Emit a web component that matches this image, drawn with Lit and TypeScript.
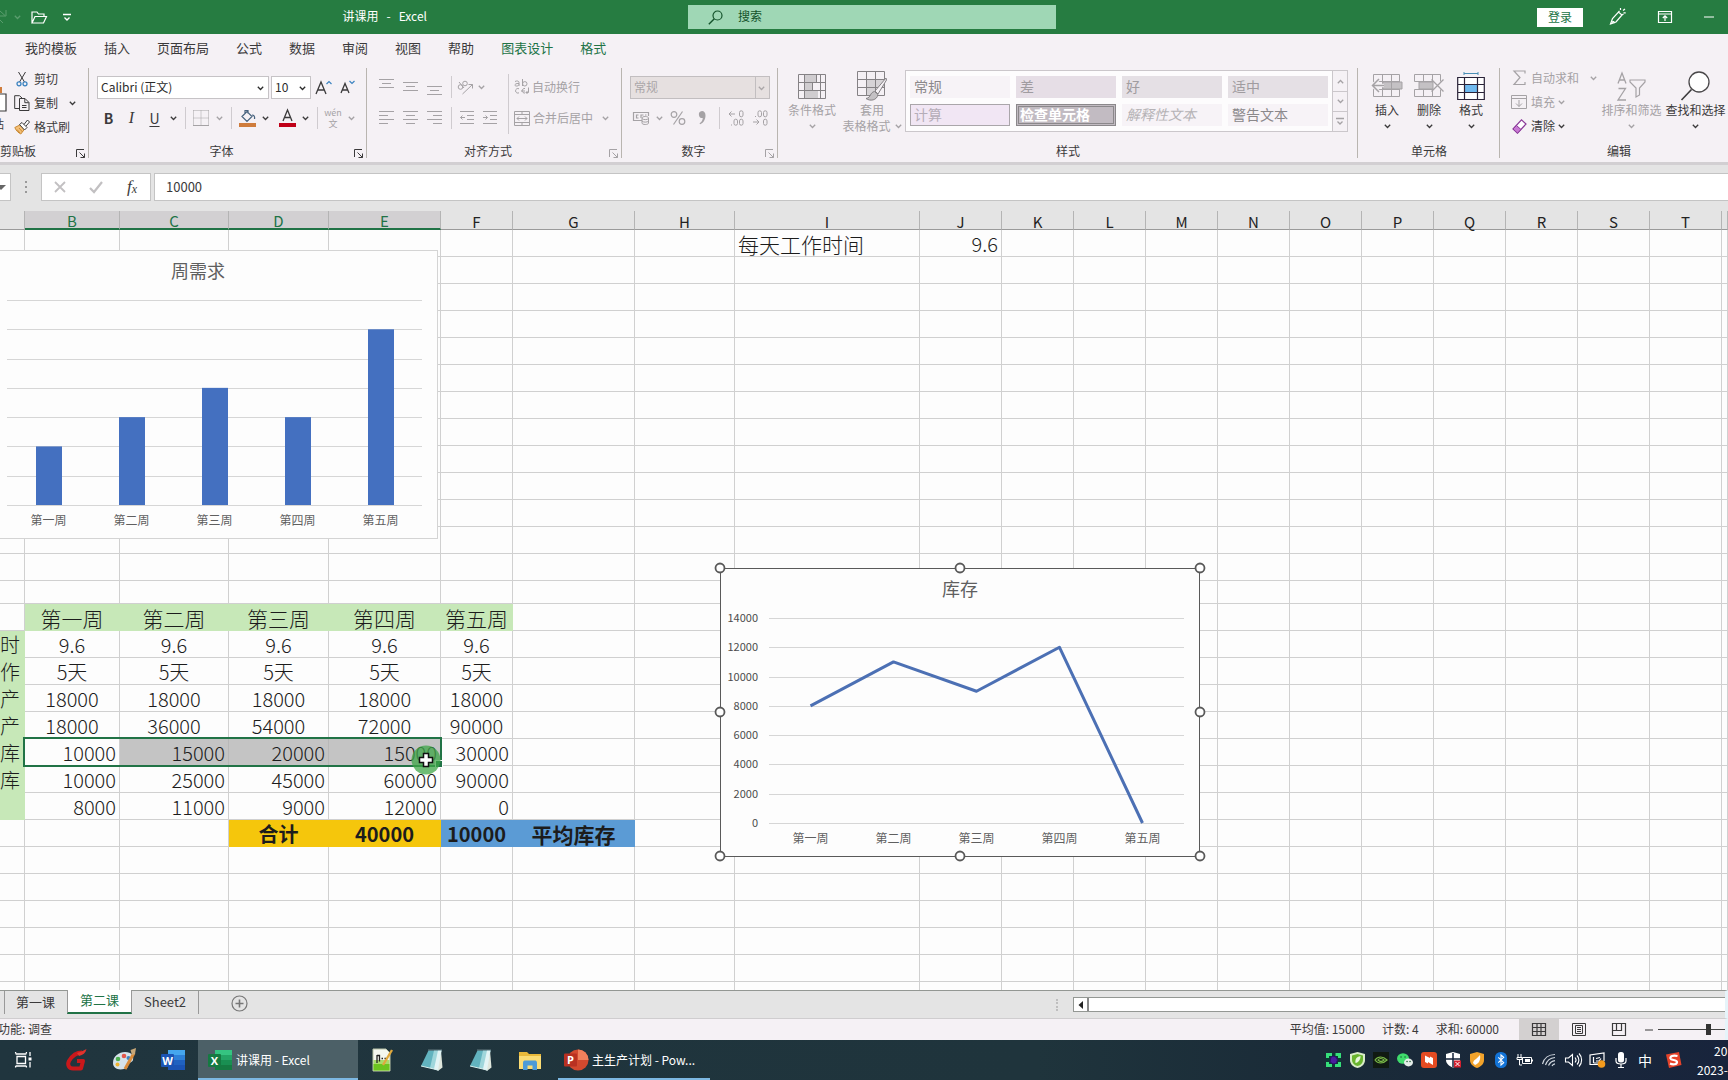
import { LitElement, html, svg, css, nothing, TemplateResult, SVGTemplateResult } from "lit";
import { customElement, property } from "lit/decorators.js";

const base = css`
  * { box-sizing: border-box; }
  :host { box-sizing: border-box; font-family: "Noto Sans CJK SC", "Noto Sans", sans-serif; font-size: 12px; line-height: 16px; color: #3b3a3b; }
  button, input, select { font: inherit; color: inherit; border: 0; padding: 0; margin: 0; background: none; border-radius: 0; outline: none; }
  button { display: inline-flex; align-items: center; justify-content: center; white-space: nowrap; }
  svg { display: block; flex: none; overflow: visible; }
`;

const icon = (w: number, h: number, body: SVGTemplateResult) =>
  html`<svg width=${w} height=${h} viewBox="0 0 ${w} ${h}" fill="none" stroke="currentColor" stroke-width="1" aria-hidden="true">${body}</svg>`;

const chevron = icon(7, 5, svg`<path d="M.8 .8 3.500 3.500 6.200 .8" stroke-width="1.300"/>`);
const launcher = icon(9, 9, svg`<path d="M.5 8V.5H8M3.500 3.500l5 5M8.500 4.500v4h-4"/>`);

const icons = {
  undo: icon(10, 16, svg`<path d="M0 2l5 4.500M6 1v6H0M0 11l3 3"/>`),
  folder: icon(16, 13, svg`<path d="M1 12V1h5l1.500 2H13v2.500M1 12l3-6.500h11.500L12.500 12z" stroke-width="1.200"/>`),
  customize: icon(8, 7, svg`<path d="M0 .5h8M1.500 3.500 4 6l2.500-2.500" stroke-width="1.300"/>`),
  search: icon(15, 15, svg`<circle cx="9.500" cy="5.500" r="4.500" stroke-width="1.200"/><path d="M6.300 8.700.8 14.200" stroke-width="1.400"/>`),
  pen: icon(17, 18, svg`<path d="M1.500 16 3.500 10.500l6-6.500 3.500 3-6 7zM3 14.500c1-1.500 2.500-1 2 .8M9.500 4l1-1.200M13 7l1.500-1M11.500 0v2M14 2.500l2-1.500M14.500 4.800h2.200" stroke-width="1.200"/>`),
  ribbonMode: icon(14, 12, svg`<path d="M.5.500h13v11H.5zM.5 3h13M7 10V5M4.800 7 7 4.800 9.200 7" stroke-width="1.200"/>`),
  minimize: icon(10, 2, svg`<path d="M0 1h10"/>`),
  cut: icon(12, 16, svg`<path d="M2.500 1 8.500 11M9.500 1l-6 10"/><circle cx="3" cy="12.800" r="2" stroke="#3c83c0" stroke-width="1.300"/><circle cx="9" cy="12.800" r="2" stroke="#3c83c0" stroke-width="1.300"/>`),
  copy: icon(16, 16, svg`<path d="M5 13.500H.7V.7h4.800L8 3M5.500 3.500h5.500l4 4v8H5.500zM10.800 3.700v4h4M8 10.500h4.500M8 12.500h4.500"/>`),
  brush: icon(16, 16, svg`<path d="M.8 8.500l5-2.500 4.500 4.500-3.500 4.500C5.500 14.500 2 12 .8 8.500z" fill="#f5c078" stroke="#c98a35"/><path d="M3 10.500l3 3.500M5 9l3.500 4" stroke="#c98a35"/><path d="M5.500 5.500 8 3.500l5 5-2.500 2.500zM10 5.500 13.500 1 15.500 3 12 7" fill="#fff"/>`),
  growFont: icon(17, 16, svg`<path d="M1 15 6 3l5 12M2.700 11h6.600" stroke-width="1.300"/><path d="M11.500 5 14 2.500 16.500 5" stroke="#3c83c0" stroke-width="1.200"/>`),
  shrinkFont: icon(15, 14, svg`<path d="M1 13 5 3.500 9 13M2.400 10h5.200" stroke-width="1.300"/><path d="M9.500 1 12 3.500 14.500 1" stroke="#3c83c0" stroke-width="1.200"/>`),
  borders: icon(16, 16, svg`<path d="M.5.500h15M.5.5v15M15.500.5v15M8 .5v15M.5 8h15" stroke-dasharray="1 1"/><path d="M0 15.500h16"/>`),
  fill: icon(17, 18, svg`<path d="M3 7.500 8 2.500l5 5-5 5zM6 5V1.500h3v3M13 6c2 0 3 1.500 2.500 4" stroke="#46627d" stroke-width="1.200"/><path d="M0 14h17v4H0z" fill="#cf7c3c" stroke="none"/>`),
  fontColor: icon(17, 18, svg`<path d="M4 12 8.500 1 13 12M5.500 8.500h6" stroke-width="1.300"/><path d="M0 14h17v4H0z" fill="#c00018" stroke="none"/>`),
  alTop: icon(15, 18, svg`<path d="M0 1.500h15M3 5.500h9M0 9.500h15"/>`),
  alMid: icon(15, 18, svg`<path d="M0 4.500h15M3 8.500h9M0 12.500h15"/>`),
  alBottom: icon(15, 18, svg`<path d="M0 8.500h15M3 12.500h9M0 16.500h15"/>`),
  alLeft: icon(15, 14, svg`<path d="M0 .5h15M0 4.500h9M0 8.500h15M0 12.500h9"/>`),
  alCenter: icon(15, 14, svg`<path d="M0 .5h15M3 4.500h9M0 8.500h15M3 12.500h9"/>`),
  alRight: icon(15, 14, svg`<path d="M0 .5h15M6 4.500h9M0 8.500h15M6 12.500h9"/>`),
  orient: icon(17, 15, svg`<circle cx="3.500" cy="7" r="2.300"/><path d="M2 2l5 6"/><circle cx="8" cy="3.500" r="2.300"/><path d="M5.500 14 15.500 4.500M11.500 4.500h4v4"/>`),
  outdent: icon(14, 14, svg`<path d="M0 .5h14M7 4.500h7M7 8.500h7M0 12.500h14M5 6.500H.5M2.500 4.500l-2 2 2 2"/>`),
  indent: icon(14, 14, svg`<path d="M0 .5h14M7 4.500h7M7 8.500h7M0 12.500h14M0 6.500h4.500M2.500 4.500l2 2-2 2"/>`),
  wrap: icon(15, 16, svg`<path d="M1 2.500c2-1 4-.5 4 1V7M5 4.500c-5-.5-5 3-2 2.500 1 0 2-1 2-1.500M8.500 0v7"/><circle cx="10.800" cy="4.800" r="2.200"/><path d="M5 9.800a2.300 2.300 0 1 0 0 4M7 12h4M11 14a2.300 2.300 0 1 1 0-4.500M14.500 8.500v5H12M13.500 12 12 13.500 13.500 15"/>`),
  merge: icon(16, 15, svg`<path d="M.5.500h15v14H.5zM.5 3.500h15M.5 11.500h15M8 .5v3M8 11.500v3M3 7.500h10M5 5.500l-2 2 2 2M11 5.500l2 2-2 2"/>`),
  money: icon(17, 14, svg`<path d="M9 9.500H.5v-8h15V5M5.500 4h-2v3h2M8 7V4h2.500M12 4h1.500" stroke-width="1.200"/><path d="M9 7c0-2 6.500-2 6.500 0v5c0 2-6.500 2-6.500 0zM9 7.500c1 1.500 5.500 1.500 6.500 0M9 10c1 1.500 5.500 1.500 6.500 0"/>`),
  percent: icon(16, 16, svg`<circle cx="4" cy="4.500" r="2.800" stroke-width="1.200"/><circle cx="12" cy="11.500" r="2.800" stroke-width="1.200"/><path d="M12.500 1.500 3.500 14.500" stroke-width="1.200"/>`),
  comma: icon(8, 14, svg`<path d="M4 0a3.500 3.500 0 1 0 .8 7C4.500 9.500 3.500 11 1.500 12.500l.7.800C6 11.500 7.500 8 7.500 4.500 7.500 1.500 6 0 4 0z" fill="currentColor" stroke="none"/>`),
  moreDec: icon(17, 16, svg`<path d="M7 4H1M3.500 1.500 1 4l2.500 2.500M3.500 14.500v1"/><rect x="11.500" y=".8" width="3.500" height="6" rx="1.700"/><rect x="6" y="9.200" width="3.500" height="6" rx="1.700"/><rect x="11.500" y="9.200" width="3.500" height="6" rx="1.700"/>`),
  lessDec: icon(17, 16, svg`<path d="M1 12h6M4.500 9.500 7 12l-2.500 2.500M3.500 6v1"/><rect x="6" y=".8" width="3.500" height="6" rx="1.700"/><rect x="11.500" y=".8" width="3.500" height="6" rx="1.700"/><rect x="11.500" y="9.200" width="3.500" height="6" rx="1.700"/>`),
  condFormat: icon(28, 25, svg`<path d="M6 1h12v7H6zM6 8h8v8H6zM6 16h14v8H6z" fill="#cfcccf" stroke="none"/><path d="M.5.500h27v24H.5zM.5 8.500h27M.5 16.500h27M6.500.5v24M18.500.5v8M22.500.5v24M14.500 8.500v8" stroke="#858285"/>`),
  tableFormat: icon(30, 30, svg`<path d="M10 9h9v16h-9zM19 9h9v8h-9z" fill="#d6d3d6" stroke="none"/><path d="M.5.500h27v24H.5zM.5 8.500h27M.5 16.500h27M9.500.5v24M18.500.5v24" stroke="#858285"/><path d="M29 7 18 20l3 3 8.500-14z" fill="#f5f1f5" stroke="#858285"/><path d="M17.500 20.500c-5 1-3 6-8.500 7 4 3 11 2 12-4z" fill="#c4c1c4" stroke="#858285"/>`),
  insert: icon(32, 24, svg`<path d="M2.500.500h26v22h-26zM2.500 7.500h26M2.500 15.500h26M11.500.5v22M20.500.5v22"/><path d="M12 8h19v7H12z" fill="#c4c1c4"/><path d="M20.500 8v7"/><path d="M8 5 1.500 11.500 8 18M2 11.500h11" stroke-width="3.500" stroke="#f5f1f5"/><path d="M8 5 1.500 11.500 8 18M2 11.500h11" stroke-width="1.500"/>`),
  remove: icon(32, 24, svg`<path d="M1.500 7.500V.5h26v7M1.500 15.500v7h26v-7M1.500 7.500h19M1.500 15.500h19M10.500.5v22M19.500.5v22"/><path d="M6 8h14v7H6z" fill="#c4c1c4"/><path d="M18.500 5.500l12 12M30.500 5.500l-12 12" stroke-width="1.300"/>`),
  format: icon(28, 28, svg`<path d="M1 5h27v22.500H1z" fill="#fff" stroke="none"/><path d="M8 12.500h12v7.500H8z" fill="#6fb9ee" stroke="none"/><path d="M.7 5.500h26.600v22H.7zM.7 12.500h26.600M.7 20.500h26.600M7.500 5.500v22M20.500 5.500v22" stroke="#2a2338" stroke-width="1.200"/><path d="M7 1.500h14M7 0v3M21 0v3" stroke="#4a8fb5"/>`),
  sigma: icon(13, 16, svg`<path d="M12 3.500V1H1l6 6.500L1 14.500h11V12" stroke-width="1.200"/>`),
  fillDown: icon(16, 14, svg`<path d="M.5.500h15v13H.5zM.5 3.500h15M8 5v6.500M5 8.500l3 3 3-3"/>`),
  eraser: icon(15, 15, svg`<path d="M1 10 9.500.800 14 5 5.500 14.200z" fill="#fff" stroke="#8a3a98" stroke-width="1.200"/><path d="M1 10l3.500-3.500 4.500 4-3.500 3.700z" fill="#c879d4" stroke="#8a3a98"/>`),
  sort: icon(29, 29, svg`<path d="M1 11.500 5 1l4 10.500M2.500 8h5M1.500 16.500h7L1 28h8" stroke-width="1.300"/><path d="M13 8h15v2l-5.500 6v7l-3.500 2v-9L13 10z" stroke-width="1.200"/>`),
  find: icon(29, 30, svg`<circle cx="18" cy="11" r="10" fill="#fff" stroke="#4a484a" stroke-width="1.300"/><path d="M10.500 18.500.5 29" stroke-width="1.600"/>`),
  cancel: icon(12, 12, svg`<path d="M1 1l10 10M11 1 1 11" stroke="#c2c0c2" stroke-width="1.800"/>`),
  accept: icon(14, 12, svg`<path d="M1 7l4 4L13 1" stroke="#c2c0c2" stroke-width="2.200"/>`),
  normalView: icon(14, 13, svg`<path d="M.5.500h13v12H.5zM.5 4.500h13M.5 8.500h13M5 .5v12M9 .5v12" stroke-width="1.200"/>`),
  pageView: icon(14, 13, svg`<path d="M.5.500h13v12H.5zM3.500 2.500h7v8h-7zM5 4.500h4M5 6.500h4M5 8.500h4"/>`),
  breakView: icon(14, 13, svg`<path d="M.5.500h13v12H.5zM4.500.5v7h5v-7M.5 7.500h4" stroke-width="1.200"/>`),
  addSheet: icon(17, 17, svg`<circle cx="8.500" cy="8.500" r="7.500" stroke="#777" stroke-width="1.200"/><path d="M8.500 4.500v8M4.500 8.500h8" stroke="#777" stroke-width="1.600"/>`),
};

@customElement("title-bar")
export class TitleBar extends LitElement {
  static styles = [base, css`
    :host { display: grid; grid-template-columns: minmax(0, 1fr) 368px 672px; align-items: center; height: 34px; background: #267c41; color: #fff; }
    .left { display: flex; align-items: center; justify-content: space-between; padding-right: 261px; }
    .quick { display: flex; align-items: center; }
    .quick button { height: 24px; }
    .faded { color: #5a9d6e; gap: 4px; width: 23px; justify-content: flex-start; }
    .open { width: 32px; }
    .more { width: 24px; }
    .doc { white-space: pre; padding-bottom: 2px; }
    .search { display: flex; align-items: center; gap: 15px; height: 24px; padding: 0 20px; background: #9fd7b5; color: #14532b; }
    .search input { flex: 1; min-width: 0; padding-bottom: 2px; }
    .search input::placeholder { color: #14532b; opacity: 1; }
    .right { display: flex; align-items: center; justify-content: flex-end; gap: 26px; padding-right: 14px; }
    .tools { display: flex; align-items: center; gap: 32px; }
    .login { width: 46px; height: 19px; background: #fff; color: #217346; }
  `];
  render() {
    return html`
      <div class="left">
        <div class="quick">
          <button class="faded" aria-label="恢复">${icons.undo}${chevron}</button>
          <button class="open" aria-label="打开">${icons.folder}</button>
          <button class="more" aria-label="自定义">${icons.customize}</button>
        </div>
        <span class="doc">讲课用   -   Excel</span>
      </div>
      <label class="search">${icons.search}<input type="search" placeholder="搜索" aria-label="搜索"></label>
      <div class="right">
        <button class="login">登录</button>
        <div class="tools">
          <button aria-label="笔">${icons.pen}</button>
          <button aria-label="功能区显示选项">${icons.ribbonMode}</button>
          <button aria-label="最小化">${icons.minimize}</button>
        </div>
      </div>`;
  }
}

const tabs = ["我的模板", "插入", "页面布局", "公式", "数据", "审阅", "视图", "帮助", "图表设计", "格式"];
const cellStyles = [
  ["常规", "plain"], ["差", "bad"], ["好", "good"], ["适中", "good"],
  ["计算", "calc"], ["检查单元格", "check"], ["解释性文本", "explain"], ["警告文本", "plain"],
];

@customElement("excel-ribbon")
export class ExcelRibbon extends LitElement {
  static styles = [base, css`
    :host { display: block; background: #f5f1f5; border-bottom: 3px solid #d2cfd2; }
    .tabs { display: flex; gap: 27px; height: 32px; padding: 0 0 4px 25px; font-size: 13px; }
    .tabs .ctx { color: #217346; }
    .groups { display: flex; height: 96px; }
    .group { display: flex; flex-direction: column; flex: none; position: relative; overflow: hidden; }
    .group::after { content: ""; position: absolute; right: 0; top: 2px; bottom: 4px; width: 1px; background: #b9b5b0; }
    .group:last-child::after { display: none; }
    .body { flex: 1; min-height: 0; display: flex; }
    .caption { display: flex; align-items: center; height: 20px; padding-bottom: 2px; }
    .caption span { flex: 1; text-align: center; white-space: nowrap; }
    .caption button { width: 13px; height: 18px; justify-content: flex-start; padding-top: 5px; }
    .off { color: #a5a2a5; }
    .clip { width: 89px; }
    .clip .caption span { text-align: left; }
    .paste { width: 13px; overflow: hidden; display: flex; flex-direction: column; align-items: flex-start; padding-top: 9px; gap: 3px; }
    .paste-text { width: 4px; overflow: hidden; display: flex; justify-content: flex-end; }
    .stack { display: flex; flex-direction: column; padding-top: 1px; }
    .stack button { height: 24px; gap: 3px; justify-content: flex-start; }
    .stack .chev { padding-left: 8px; }
    .slot { width: 18px; display: flex; justify-content: center; }
    .font { width: 278px; }
    .align { width: 255px; }
    .number { width: 156px; }
    .styles { flex: 1 1 0; min-width: 0; }
    .cells { width: 142px; }
    .edit { width: 228px; }
    .rows { display: flex; flex-direction: column; gap: 7px; padding-top: 9px; }
    .pad { padding-left: 8px; }
    .pad7 { padding-left: 7px; }
    .first { width: 138px; }
    .row { display: flex; align-items: center; height: 24px; }
    .w24 { width: 24px; height: 24px; }
    .w23 { width: 23px; height: 24px; }
    .w22 { width: 22px; height: 24px; }
    .w18 { width: 18px; height: 24px; }
    .w14 { width: 14px; height: 24px; }
    .nudge { margin-left: 4px; }
    .sep { width: 10px; height: 22px; background: linear-gradient(#cfcbcf, #cfcbcf) center / 1px 100% no-repeat; }
    .tall { width: 6px; height: 60px; margin-top: 8px; }
    .drop { position: relative; display: flex; height: 23px; border: 1px solid #c6c3c6; background: #fff; color: #2b2b2b; }
    .drop select { appearance: none; width: 100%; padding-left: 3px; opacity: 1; }
    .drop svg { position: absolute; right: 4px; top: 9px; pointer-events: none; }
    .face { width: 172px; margin-right: 2px; }
    .size { width: 40px; }
    .numfmt { width: 140px; background: #e6e0e0; color: #aaa6a8; border-color: #c2bec0; }
    .numfmt::after { content: ""; position: absolute; right: 13px; top: 0; bottom: 0; width: 1px; background: #c2bec0; }
    .b { font-weight: 700; font-size: 14px; }
    .i { font-style: italic; font-family: "Liberation Serif", serif; font-size: 16px; }
    .u { text-decoration: underline; text-underline-offset: 2px; font-size: 14px; }
    .wen { flex-direction: column; font-size: 9px; line-height: 9px; gap: 2px; }
    .label { gap: 3px; padding-left: 3px; height: 24px; }
    .big { display: flex; flex-direction: column; justify-content: flex-start; width: 66px; padding-top: 4px; }
    .pic { height: 32px; display: flex; align-items: center; justify-content: center; }
    .line { display: flex; align-items: center; gap: 4px; height: 16px; }
    .w42 { width: 42px; }
    .w54 { width: 54px; }
    .w68 { width: 68px; }
    .gallery { flex: 1; min-width: 0; display: flex; height: 62px; margin: 4px 10px 0 0; border: 1px solid #cbc7cb; background: #fdfcfd; }
    .swatches { flex: 1; display: grid; grid-template-columns: repeat(4, minmax(0, 1fr)); grid-auto-rows: 22px; gap: 6px; padding: 5px 4px; }
    .swatches button { justify-content: flex-start; padding: 0 0 2px 4px; font-size: 14px; overflow: hidden; color: #8b888b; background: #f7f3f7; }
    .swatches .bad { background: #e6dee6; color: #a09ca0; }
    .swatches .good { background: #e5e0e5; color: #a09ca0; }
    .swatches .calc { background: #f1e6f4; border: 1px solid #aaa6aa; color: #b5adb8; padding-left: 3px; }
    .swatches .check { background: #c2bbc2; border: 3px double #8b888b; color: #fff; font-weight: 700; padding-left: 1px; }
    .swatches .explain { font-style: italic; color: #b5b2b5; }
    .scroll { width: 15px; display: grid; grid-template-rows: repeat(3, 1fr); border-left: 1px solid #cbc7cb; background: #f5f1f5; color: #a5a2a5; }
    .scroll button + button { border-top: 1px solid #cbc7cb; }
    .up svg { transform: rotate(180deg); }
    .editcol { width: 100px; padding-left: 10px; flex: none; padding-top: 0; }
    .edit .caption { padding-left: 10px; }
    .far { padding-left: 8px; }
  `];

  private big(pic: TemplateResult, label: string, cls = "", second = "") {
    return html`<button class="big ${cls}"><span class="pic">${pic}</span><span class="line">${label}</span><span class="line">${second}${chevron}</span></button>`;
  }
  private caption(label: string, more = true, off = false) {
    return html`<div class="caption"><span>${label}</span>${more ? html`<button class=${off ? "off" : ""} aria-label="${label}设置">${launcher}</button>` : nothing}</div>`;
  }
  private btn(pic: TemplateResult | string, label: string, cls = "w24") {
    return html`<button class=${cls} aria-label=${label}>${pic}</button>`;
  }

  render() {
    return html`
      <div class="tabs" role="tablist">
        ${tabs.map((t, i) => html`<button role="tab" class=${i > 7 ? "ctx" : ""}>${t}</button>`)}
      </div>
      <div class="groups">
        <section class="group clip">
          <div class="body">
            <button class="paste" aria-label="粘贴">
              ${icon(8, 28, svg`<path d="M0 2h2v6H0z" fill="#cf7c3c" stroke="none"/><path d="M-2 9h8v17h-8" fill="#fff" stroke="#3b3a3b" stroke-width="1.200"/>`)}
              <span class="paste-text">贴</span>
            </button>
            <div class="stack">
              <button><span class="slot">${icons.cut}</span>剪切</button>
              <button><span class="slot">${icons.copy}</span>复制<span class="chev">${chevron}</span></button>
              <button><span class="slot">${icons.brush}</span>格式刷</button>
            </div>
          </div>
          ${this.caption("剪贴板")}
        </section>

        <section class="group font">
          <div class="body"><div class="rows pad">
            <div class="row">
              <label class="drop face"><select aria-label="字体"><option>Calibri (正文)</option></select>${chevron}</label>
              <label class="drop size"><select aria-label="字号"><option>10</option></select>${chevron}</label>
              ${this.btn(icons.growFont, "增大字号")}${this.btn(icons.shrinkFont, "减小字号")}
            </div>
            <div class="row">
              ${this.btn("B", "加粗", "w23 b")}${this.btn("I", "倾斜", "w23 i")}${this.btn("U", "下划线", "w23 u")}${this.btn(chevron, "下划线选项", "w14")}
              <span class="sep"></span>
              ${this.btn(icons.borders, "边框", "w22 off")}${this.btn(chevron, "边框选项", "w14 off")}
              <span class="sep"></span>
              ${this.btn(icons.fill, "填充颜色", "w22")}${this.btn(chevron, "填充选项", "w14")}
              ${this.btn(icons.fontColor, "字体颜色", "w22 nudge")}${this.btn(chevron, "颜色选项", "w14")}
              <span class="sep"></span>
              <button class="w22 off wen" aria-label="拼音"><span>wén</span><span>文</span></button>${this.btn(chevron, "拼音选项", "w14 off")}
            </div>
          </div></div>
          ${this.caption("字体")}
        </section>

        <section class="group align">
          <div class="body off">
            <div class="rows pad7 first">
              <div class="row">
                ${this.btn(icons.alTop, "顶端对齐")}${this.btn(icons.alMid, "垂直居中")}${this.btn(icons.alBottom, "底端对齐")}
                <span class="sep"></span>${this.btn(icons.orient, "方向", "w18")}${this.btn(chevron, "方向选项", "w14")}
              </div>
              <div class="row">
                ${this.btn(icons.alLeft, "左对齐")}${this.btn(icons.alCenter, "居中")}${this.btn(icons.alRight, "右对齐")}
                <span class="sep"></span>${this.btn(icons.outdent, "减少缩进", "w22")}${this.btn(icons.indent, "增加缩进")}
              </div>
            </div>
            <span class="sep tall"></span>
            <div class="rows">
              <div class="row"><button class="label">${icons.wrap}自动换行</button></div>
              <div class="row"><button class="label">${icons.merge}合并后居中</button>${this.btn(chevron, "合并选项")}</div>
            </div>
          </div>
          ${this.caption("对齐方式", true, true)}
        </section>

        <section class="group number">
          <div class="body off"><div class="rows pad">
            <div class="row"><label class="drop numfmt"><select aria-label="数字格式"><option>常规</option></select>${chevron}</label></div>
            <div class="row">
              ${this.btn(icons.money, "会计格式", "w22")}${this.btn(chevron, "会计选项", "w14")}${this.btn(icons.percent, "百分比")}${this.btn(icons.comma, "千位分隔")}
              <span class="sep"></span>${this.btn(icons.moreDec, "增加小数")}${this.btn(icons.lessDec, "减少小数")}
            </div>
          </div></div>
          ${this.caption("数字", true, true)}
        </section>

        <section class="group styles">
          <div class="body pad7 off">
            ${this.big(icons.condFormat, "条件格式", "w54")}
            ${this.big(icons.tableFormat, "套用", "", "表格格式")}
            <div class="gallery">
              <div class="swatches">${cellStyles.map(([t, c]) => html`<button class=${c}>${t}</button>`)}</div>
              <div class="scroll">
                <button class="up" aria-label="上一行">${chevron}</button>
                <button aria-label="下一行">${chevron}</button>
                <button aria-label="其他">${icons.customize}</button>
              </div>
            </div>
          </div>
          ${this.caption("样式", false)}
        </section>

        <section class="group cells">
          <div class="body pad">
            ${this.big(html`<span class="off">${icons.insert}</span>`, "插入", "w42")}
            ${this.big(html`<span class="off">${icons.remove}</span>`, "删除", "w42")}
            ${this.big(icons.format, "格式", "w42")}
          </div>
          ${this.caption("单元格", false)}
        </section>

        <section class="group edit">
          <div class="body">
            <div class="stack editcol">
              <button class="off"><span class="slot">${icons.sigma}</span>自动求和<span class="far">${chevron}</span></button>
              <button class="off"><span class="slot">${icons.fillDown}</span>填充${chevron}</button>
              <button><span class="slot">${icons.eraser}</span>清除${chevron}</button>
            </div>
            ${this.big(icons.sort, "排序和筛选", "off")}
            ${this.big(icons.find, "查找和选择", "w68")}
          </div>
          ${this.caption("编辑", false)}
        </section>
      </div>`;
  }
}

@customElement("formula-bar")
export class FormulaBar extends LitElement {
  static styles = [base, css`
    :host { display: flex; align-items: flex-start; height: 46px; padding-top: 8px; background: #e4e4e4; }
    .name { width: 11px; height: 28px; background: #fff; border: 1px solid #c4c4c4; border-left: 0; justify-content: flex-start; color: #666; overflow: hidden; }
    .grip { width: 30px; height: 28px; display: flex; align-items: center; justify-content: center; color: #999; }
    .tools { width: 110px; height: 28px; display: flex; align-items: center; background: #fff; border: 1px solid #c4c4c4; margin-right: 3px; }
    .tools button { flex: 1; height: 26px; }
    .fx { font-family: "Liberation Serif", serif; font-style: italic; font-size: 17px; }
    .fx small { font-size: 12px; padding-top: 3px; }
    .value { flex: 1; min-width: 0; height: 28px; background: #fff; border: 1px solid #c4c4c4; border-right: 0; padding: 0 0 2px 11px; font-size: 13px; }
  `];
  render() {
    return html`
      <button class="name" aria-label="名称框">${icon(6, 5, svg`<path d="M-4 0H6L1 5z" fill="currentColor" stroke="none"/>`)}</button>
      <span class="grip">${icon(2, 12, svg`<path d="M0 1h2M0 6h2M0 11h2" stroke-width="2"/>`)}</span>
      <div class="tools">
        <button aria-label="取消">${icons.cancel}</button>
        <button aria-label="输入">${icons.accept}</button>
        <button class="fx" aria-label="插入函数">f<small>x</small></button>
      </div>
      <input class="value" aria-label="编辑栏" value="10000">`;
  }
}

const weeks = ["第一周", "第二周", "第三周", "第四周", "第五周"];

@customElement("chart-card")
export class ChartCard extends LitElement {
  @property() heading = "";
  @property() kind: "bar" | "line" = "bar";
  @property({ attribute: false }) values: number[] = [];
  @property({ type: Number }) max = 0;
  @property({ type: Boolean }) selected = false;
  static styles = [base, css`
    :host { display: block; width: 480px; height: 289px; }
    text { font-family: "Noto Sans CJK SC", sans-serif; fill: #5f5f5f; stroke: none; text-anchor: middle; font-size: 12px; }
    .title { font-size: 18px; }
    .tick { font-size: 11px; text-anchor: end; fill: #4c4c4c; }
  `];
  render() {
    const top = 50, bottom = 255, left = 49, step = 83;
    const y = (v: number) => bottom - (v / this.max) * (bottom - top);
    const x = (i: number) => left + step * (i + 0.5);
    const ticks = Array.from({ length: 8 }, (_, i) => (this.max / 7) * i);
    const showTicks = this.kind === "line";
    return html`<svg width="480" height="289" viewBox="0 0 480 289" role="img" aria-label=${this.heading}>
      <rect x=".5" y=".5" width="479" height="288" fill="#fdfdfd" stroke=${this.selected ? "#595959" : "#d4d4d4"}/>
      <text class="title" x="240" y="28">${this.heading}</text>
      ${ticks.map(t => svg`<path d="M${left} ${Math.round(y(t)) + 0.5}h415" stroke="#d6d6d6"/>${showTicks ? svg`<text class="tick" x="38" y=${Math.round(y(t)) + 4}>${t}</text>` : nothing}`)}
      ${this.kind === "bar"
        ? this.values.map((v, i) => svg`<rect x=${Math.round(x(i)) - 13} y=${y(v)} width="26" height=${bottom - y(v)} fill="#4470c0"/>`)
        : svg`<polyline points=${this.values.map((v, i) => `${x(i)},${y(v)}`).join(" ")} fill="none" stroke="#4c70b4" stroke-width="3" stroke-linejoin="round"/>`}
      ${weeks.map((w, i) => svg`<text x=${x(i)} y="275">${w}</text>`)}
      ${this.selected ? [0, 240, 480].flatMap(cx => [0, 144, 288].filter(cy => cx !== 240 || cy !== 144)
        .map(cy => svg`<circle cx=${cx} cy=${cy} r="4.500" fill="#fff" stroke="#595959" stroke-width="1.800"/>`)) : nothing}
    </svg>`;
  }
}

type Cell = { t?: string | number; c: string };
const columns: [string, number][] = [["A", 25], ["B", 95], ["C", 109], ["D", 100], ["E", 112], ["F", 72], ["G", 122], ["H", 100], ["I", 185], ["J", 82],
  ..."KLMNOPQRST".split("").map(l => [l, 72] as [string, number])];

const row = (first: Cell | null, values: (string | number)[], cls: string): Record<number, Cell> => {
  const out: Record<number, Cell> = {};
  if (first) out[0] = first;
  values.forEach((t, i) => { out[i + 1] = { t, c: cls }; });
  return out;
};
const side = (t: string): Cell => ({ t, c: "num green side" });
const data: Record<number, Record<number, Cell>> = {
  1: { 8: { t: "每天工作时间", c: "han" }, 9: { t: "9.6", c: "num" } },
  15: row(null, weeks, "mid green han"),
  16: row(side("时"), ["9.6", "9.6", "9.6", "9.6", "9.6"], "mid"),
  17: row(side("作"), ["5天", "5天", "5天", "5天", "5天"], "mid"),
  18: row(side("产"), [18000, 18000, 18000, 18000, 18000], "mid"),
  19: row(side("产"), [18000, 36000, 54000, 72000, 90000], "mid"),
  20: {
    0: side("库"), 1: { t: 10000, c: "num" }, 2: { t: 15000, c: "num grey" }, 3: { t: 20000, c: "num grey" },
    4: { t: 15000, c: "num grey" }, 5: { t: 30000, c: "num" },
  },
  21: row(side("库"), [10000, 25000, 45000, 60000, 90000], "num"),
  22: row(side(""), [8000, 11000, 9000, 12000, 0], "num"),
  23: {
    3: { t: "合计", c: "mid bold yellow" }, 4: { t: 40000, c: "mid bold yellow" },
    5: { t: 10000, c: "mid bold blue" }, 6: { t: "平均库存", c: "mid bold blue han" },
  },
};

@customElement("work-sheet")
export class WorkSheet extends LitElement {
  static styles = [base, css`
    :host { display: block; position: relative; overflow: hidden; background: #fdfdfd; }
    table { table-layout: fixed; width: 100%; border-spacing: 0; border-collapse: separate; }
    th { height: 19px; padding: 3px 0 0; background: #e4e4e4; border-right: 1px solid #b4b4b4; border-bottom: 1px solid #9a9a9a; font-weight: 400; font-size: 15px; line-height: 15px; color: #222; }
    .picked { background: #d2d0d2; color: #217346; border-bottom: 2px solid #217346; padding-top: 2px; }
    td { height: 27px; padding: 2px 3px 0 3px; border-right: 1px solid #d0d0d0; border-bottom: 1px solid #d0d0d0; font-size: 20px; line-height: 24px; font-weight: 300; color: #1c1c1c; white-space: nowrap; }
    .short td { height: 23px; }
    .num { text-align: right; }
    .han { font-size: 21px; }
    .mid { text-align: center; }
    .bold { font-weight: 700; }
    .green { background: #c7e8b8; border-color: #c7e8b8; }
    .side { padding: 2px 4px 0 0; }
    .grey { background: #c4c4c4; border-color: #b8b8b8; }
    .yellow { background: #f5c60c; border-color: #f5c60c; }
    .blue { background: #5b9bd5; border-color: #5b9bd5; }
    .demand { position: absolute; left: -42px; top: 39px; }
    .stock { position: absolute; left: 720px; top: 357px; }
    .range { position: absolute; left: 23px; top: 526px; width: 419px; height: 30px; border: 2px solid #217346; }
    .range::after { content: ""; position: absolute; right: -3px; bottom: -3px; width: 6px; height: 6px; background: #217346; border: 1px solid #fdfdfd; }
    .pointer { position: absolute; left: 411px; top: 534px; }
  `];
  render() {
    return html`
      <table>
        <colgroup>${columns.map(([, w]) => html`<col width=${w}>`)}<col></colgroup>
        <thead><tr>${columns.map(([l], i) => html`<th scope="col" class=${i > 0 && i < 5 ? "picked" : ""}>${i ? l : ""}</th>`)}<th></th></tr></thead>
        <tbody>
          ${Array.from({ length: 29 }, (_, r) => r + 1).map(r => html`<tr class=${r === 14 ? "short" : ""}>
            ${Array.from({ length: 21 }, (_, c) => { const cell = data[r]?.[c]; return html`<td class=${cell?.c ?? ""}>${cell?.t ?? nothing}</td>`; })}
          </tr>`)}
        </tbody>
      </table>
      <chart-card class="demand" heading="周需求" kind="bar" max="35000" .values=${[10000, 15000, 20000, 15000, 30000]}></chart-card>
      <chart-card class="stock" heading="库存" kind="line" max="14000" selected .values=${[8000, 11000, 9000, 12000, 0]}></chart-card>
      <div class="range"></div>
      <div class="pointer">${icon(30, 30, svg`<circle cx="15" cy="15" r="14.500" fill="#3fa648" fill-opacity=".75" stroke="none"/><path d="M12.500 8.500h5v4h4v5h-4v4h-5v-4h-4v-5h4z" fill="#fff" stroke="#111" stroke-width="1.500"/>`)}</div>`;
  }
}

@customElement("sheet-footer")
export class SheetFooter extends LitElement {
  static styles = [base, css`
    :host { display: block; }
    .tabs { display: flex; height: 28px; background: #e4e4e4; border-top: 1px solid #939793; border-right: 3px solid #e6f4fa; font-size: 13px; }
    .tabs button { height: 23px; padding: 0 12px 2px; }
    .tabs .first { border-left: 1px solid #999; margin-left: 4px; padding-left: 11px; }
    .tabs .on { background: #fff; color: #217346; border: 1px solid #999; border-top: 0; border-bottom: 2px solid #217346; height: 24px; margin-top: -1px; }
    .last { border-right: 1px solid #999; }
    .tabs .add { width: 81px; height: 27px; }
    .gap { flex: 1; }
    .grip { width: 32px; display: flex; align-items: center; justify-content: center; color: #999; }
    .bar { display: flex; width: 652px; height: 15px; margin-top: 6px; background: #fff; border: 1px solid #939793; border-right: 0; }
    .tabs .bar button { width: 15px; height: 13px; padding: 0; border-right: 2px solid #8a8a8a; color: #222; }
    .status { display: flex; align-items: stretch; height: 22px; background: #f5f1f5; border-top: 1px solid #cfcdcf; border-right: 3px solid #e6f4fa; }
    .status span { display: flex; align-items: center; white-space: pre; padding-bottom: 1px; }
    .status .info { gap: 17px; padding-right: 20px; }
    .status .a11y { width: 55px; justify-content: flex-end; padding-right: 3px; flex: none; overflow: hidden; }
    .view { width: 40px; }
    .view.sel { background: #d3d0d0; }
    .minus { width: 19px; }
    .zoom { appearance: none; width: 67px; height: 20px; background: linear-gradient(#444, #444) center / 100% 1px no-repeat; }
    .zoom::-webkit-slider-thumb { appearance: none; width: 5px; height: 11px; background: #333; }
  `];
  render() {
    return html`
      <div class="tabs">
        <button class="first">第一课</button><button class="on">第二课</button><button class="last">Sheet2</button>
        <button class="add" aria-label="新工作表">${icons.addSheet}</button>
        <span class="gap"></span>
        <span class="grip">${icon(2, 12, svg`<path d="M0 1h2M0 4h2M0 8h2M0 11h2"/>`)}</span>
        <div class="bar"><button aria-label="向左滚动">${icon(5, 8, svg`<path d="M5 0v8L.5 4z" fill="currentColor" stroke="none"/>`)}</button></div>
      </div>
      <div class="status">
        <span class="a11y">功能: 调查</span>
        <span class="gap"></span>
        <span class="info"><span>平均值: 15000</span><span>计数: 4</span><span>求和: 60000</span></span>
        <button class="view sel" aria-label="普通">${icons.normalView}</button>
        <button class="view" aria-label="页面布局">${icons.pageView}</button>
        <button class="view" aria-label="分页预览">${icons.breakView}</button>
        <button class="minus" aria-label="缩小">${icon(8, 2, svg`<path d="M0 1h8"/>`)}</button>
        <input class="zoom" type="range" min="0" max="100" value="78" aria-label="缩放">
      </div>`;
  }
}

const office = (front: string, a: string, b: string, c: string, letter: string) => html`<svg width="25" height="22" viewBox="0 0 25 22" aria-hidden="true">
  <path d="M7 1h17v5H7z" fill=${a}/><path d="M7 6h17v5H7z" fill=${b}/><path d="M7 11h17v5H7z" fill=${c}/><path d="M7 16h17v5H7z" fill=${front}/>
  <rect x="0" y="5" width="13" height="13" rx="1" fill=${front}/>
  <text x="6.500" y="15.500" font-size="11" font-weight="700" fill="#fff" text-anchor="middle" font-family="Open Sans, sans-serif">${letter}</text></svg>`;

const notepad = icon(22, 22, svg`
  <path d="M20 1.500l1.500 17-4 3-4-1z" fill="#dfe6dc" stroke="none"/>
  <path d="M7.500 1.500H20.500L15 20.500 0 17z" fill="#62b3bf" stroke="none"/>
  <path d="M13 1.500h7.500L15 20.500l-6-1.500z" fill="#9fd6db" stroke="none"/>
  <path d="M17 1.500h3.500L17 21l-4-1z" fill="#e3f4f5" stroke="none"/>
  <path d="M0 17l15 3.500 2.500 1" stroke="#d9efee"/>
  <path d="M7.500 1h13" stroke="#7c8f96" stroke-width="1.500" stroke-dasharray="1 1"/>`);

const apps = {
  view: icon(17, 16, svg`<path d="M.6 1.500V0M11.400 0v1.500M.6 15.500V14M11.400 15.500V14M.6 2h10.800M.6 14h10.800M2 4.500h8.500v7H2zM15 0v4M15 10v5.500" stroke="#fff" stroke-width="1.300"/><path d="M13.500 5.500h3v3h-3z" fill="#fff" stroke="none"/>`),
  g: icon(22, 22, svg`<path d="M17 3.500C12 3.500 7 7 4 12c-2 4 0 7.500 4 7.500h8l2-7.500h-6" stroke="#c9181b" stroke-width="4" stroke-linejoin="round"/><path d="M12 4C15 3 18 2 21.500 0 20.500 4 18 6 14 7z" fill="#e0332d" stroke="none"/>`),
  paint: icon(25, 24, svg`<path d="M1 15C1 8 7 4 13 4c7 0 9 4 8 8-1 3-4 2-5 4-1 3 1 4-4 5C6 22.500 1 20 1 15z" fill="#d5e2ea" stroke="none"/><circle cx="6" cy="11" r="2.300" fill="#4caf50" stroke="none"/><circle cx="12" cy="8" r="2.300" fill="#e2574c" stroke="none"/><circle cx="5.500" cy="16.500" r="2" fill="#f0b432" stroke="none"/><circle cx="16.500" cy="10" r="2" fill="#3c83c0" stroke="none"/><path d="M22 5 13 21" stroke="#d98b3a" stroke-width="3"/><path d="M18.500 2 24 0l-1 6-3 1z" fill="#c8a878" stroke="none"/>`),
  npp: icon(21, 24, svg`<path d="M1 1h13l4 4v18H1z" fill="#f4f7ef" stroke="#b9c4a8"/><path d="M1.500 12h16v10.500h-16z" fill="#a9dd6a" stroke="none"/><path d="M1.500 16h16v6.500h-16z" fill="#6cc41f" stroke="none"/><path d="M5 7v8M5 7.500h2.500v6M9.500 10.500h1.500M12.500 10.500h1.500" stroke="#222" stroke-width="1.300"/><path d="M20 2 11 17" stroke="#e0a83c" stroke-width="2.400"/>`),
  explorer: icon(22, 20, svg`<path d="M0 2h8l2 2h12v15H0z" fill="#e9b93a" stroke="none"/><path d="M0 6h22v13H0z" fill="#fbdc74" stroke="none"/><path d="M4 20v-7c0-2 1-2.500 2.500-2.500h9c1.500 0 2.500.5 2.500 2.500v7h-4.500v-4.500h-5V20z" fill="#4d9bd8" stroke="none"/>`),
  ppt: icon(25, 22, svg`<circle cx="14" cy="11" r="10.500" fill="#d2492f" stroke="none"/><path d="M14 .5A10.500 10.500 0 0 1 24.500 11H14z" fill="#f0805c" stroke="none"/><rect x="0" y="4.500" width="13" height="13" rx="1" fill="#b93122" stroke="none"/><text x="6.500" y="15" font-size="11" font-weight="700" fill="#fff" stroke="none" text-anchor="middle" font-family="Open Sans, sans-serif">P</text>`),
};

const tray = [
  icon(15, 14, svg`<path d="M0 0h15v14H0z" fill="#0c3a33" stroke="none"/><path d="M1.500 5V1.500H6M9.500 1.500h4V5M13.500 9v3.500H9M6 12.500H1.500V9" stroke="#36e07a" stroke-width="3"/><path d="M5 4l2-1 3 1 1.500 3L10 10.500l-3 .5-3-2z" fill="#4a1f9c" stroke="#2a0f6a"/>`),
  icon(15, 16, svg`<path d="M7.500 0 15 2v6c0 4-3 7-7.500 8C3 15 0 12 0 8V2z" fill="#d9ecc8" stroke="none"/><path d="M7.500 2 13 3.500V8c0 3-2 5.200-5.500 6C4 13.200 2 11 2 8V3.500z" fill="#6ab52f" stroke="none"/><path d="M10.500 4C6 5 5 7.500 5.500 11c3-.5 5-3 5-7z" fill="#e9f7dc" stroke="none"/>`),
  icon(16, 16, svg`<path d="M0 0h16v16H0z" fill="#101a12" stroke="none"/><path d="M2 8c3-4 8-4 12 0-4 4-9 4-12 0zM5 8c1.500-2 4-2 6 0-2 2-4 2-6 0z" stroke="#79b947" stroke-width="1.200"/>`),
  icon(16, 14, svg`<ellipse cx="6" cy="5.500" rx="6" ry="5.200" fill="#3fdc6c" stroke="none"/><ellipse cx="11.500" cy="9.500" rx="4.500" ry="3.900" fill="#e4ece8" stroke="none"/><path d="M4 4h.1M8 4h.1M10 8.500h.1M13 8.500h.1" stroke="#1a5c33" stroke-width="1.400" stroke-linecap="round"/>`),
  icon(16, 16, svg`<rect width="16" height="16" rx="3" fill="#e54b22" stroke="none"/><path d="M4 3.500 9 6V4.500l3 1.500v7L7 10v1.500L4 10z" fill="#fff" stroke="none"/>`),
  icon(15, 16, svg`<path d="M7 0l7 2v6c0 3.500-3 6-7 7.500C3 14 0 11.500 0 8V2z" fill="#fff" stroke="none"/><path d="M7 1v14M0 7h14" stroke="#14233a" stroke-width="1.500"/><path d="M8 8.500h7v7H8z" fill="#d4202e" stroke="none"/><path d="M9.500 10l4 4M13.500 10l-4 4" stroke="#fff"/>`),
  icon(14, 16, svg`<path d="M7 0l7 2v6c0 4-3 6.500-7 8-4-1.500-7-4-7-8V2z" fill="#f2a32b" stroke="none"/><path d="M3 11c1-4 3-3 7-8 1 6-2 9-5 10z" fill="#fff" stroke="none"/>`),
  icon(12, 16, svg`<rect width="12" height="16" rx="5.500" fill="#1374d8" stroke="none"/><path d="M3.300 5.300 8.700 10.700 6 13V3l2.700 2.300-5.400 5.400" stroke="#fff" stroke-width="1.100"/>`),
  icon(16, 12, svg`<path d="M5.500 3.500h9v6h-9zM15.500 5.500v2M1 0v3M4 0v3M0 3.500h5v2H0zM2.500 5.500v5.500H5" stroke="#fff"/><path d="M8 5h5v3H8z" fill="#fff" stroke="none"/>`),
  icon(14, 14, svg`<path d="M.5 11C2 5 7 1.500 13 1.500M3.500 12C5 7.500 8 5 13 4.500M6.500 12.500C8 9.500 10 8 13 7.700M10 13c.5-1 1.500-2 3-2.200" stroke="#cfd6de" stroke-width="1.200"/>`),
  icon(17, 14, svg`<path d="M.5 5v4h3l4 3.500v-11L3.500 5zM10 4.500c1.300 1.500 1.300 3.500 0 5M12 2.500c2.500 2.500 2.500 6.500 0 9M14 .5c3.500 3.500 3.500 9.500 0 13" stroke="#fff" stroke-width="1.100"/>`),
  icon(17, 16, svg`<path d="M10 12.500H1V3l14-2v8M4.500 5v6M4.500 11H9M7 6.500l4-1M7 9h3l2-2.500" stroke="#fff" stroke-width="1.200"/><circle cx="12.500" cy="12" r="3.800" fill="#f39a1d" stroke="none"/>`),
  icon(12, 16, svg`<rect x="3" y="0" width="6" height="10.500" rx="2.500" fill="#fff" stroke="none"/><path d="M1 6v3c0 4 10 4 10 0V6M6 12v3M3 15.500h6" stroke="#fff" stroke-width="1.200"/>`),
];

@customElement("task-bar")
export class TaskBar extends LitElement {
  static styles = [base, css`
    :host { display: flex; height: 40px; background: linear-gradient(90deg, #20353e, #1f343c 60%, #1a2b38 76%, #18243c); color: #fff; overflow: hidden; }
    .slot { width: 49px; flex: none; }
    .start { margin-right: 2px; padding-right: 2px; }
    .app { flex: none; justify-content: flex-start; gap: 3px; border-bottom: 2px solid #7db8e2; border-top: 2px solid transparent; }
    .excel { width: 160px; padding-left: 10px; background: #4c6067; border-top-color: #4c6067; }
    .ppt { width: 152px; margin-left: 4px; padding-left: 6px; }
    .app span { white-space: pre; }
    .gap { flex: 1; }
    .tray { width: 24px; flex: none; }
    .ime { font-size: 14px; }
    .s { width: 32px; flex: none; }
    .clock { width: 39px; flex: none; display: flex; flex-direction: column; justify-content: center; overflow: hidden; line-height: 19px; align-items: flex-start; white-space: nowrap; padding-bottom: 1px; }
    .time { padding-left: 25px; }
    .date { padding-left: 8px; }
  `];
  render() {
    return html`
      <button class="slot start" aria-label="任务视图">${apps.view}</button>
      <button class="slot" aria-label="G">${apps.g}</button>
      <button class="slot" aria-label="画图">${apps.paint}</button>
      <button class="slot" aria-label="Word">${office("#1b54b4", "#45a6ee", "#2d80d8", "#2062c0", "W")}</button>
      <button class="app excel">${office("#157a42", "#35c481", "#23a566", "#198f52", "X")}<span>讲课用 - Excel</span></button>
      <button class="slot" aria-label="Notepad++">${apps.npp}</button>
      <button class="slot" aria-label="记事本">${notepad}</button>
      <button class="slot" aria-label="记事本">${notepad}</button>
      <button class="slot" aria-label="资源管理器">${apps.explorer}</button>
      <button class="app ppt">${apps.ppt}<span>主生产计划 - Pow...</span></button>
      <span class="gap"></span>
      ${tray.map((t, i) => html`<button class="tray" aria-label="托盘 ${i + 1}">${t}</button>`)}
      <button class="tray ime">中</button>
      <button class="s" aria-label="输入法">${icon(17, 16, svg`<path d="M1 2.500 14 0l2.500 13L4 16z" fill="#e5432a" stroke="none"/><path d="M12.500 4C8 3 5 4 5.500 6.500 6 8.500 12 7.500 12 10c0 2.500-4 3-7 1.500" stroke="#fff" stroke-width="2.200"/>`)}</button>
      <span class="clock"><span class="time">20</span><span class="date">2023-</span></span>`;
  }
}

@customElement("app-root")
export class AppRoot extends LitElement {
  static styles = css`
    :host { display: flex; flex-direction: column; height: 100vh; overflow: hidden; }
    .sheet { flex: 1 1 0; min-height: 0; }
    .fixed { flex: none; }
  `;
  render() {
    return html`
      <title-bar class="fixed"></title-bar>
      <excel-ribbon class="fixed"></excel-ribbon>
      <formula-bar class="fixed"></formula-bar>
      <work-sheet class="sheet"></work-sheet>
      <sheet-footer class="fixed"></sheet-footer>
      <task-bar class="fixed"></task-bar>`;
  }
}
